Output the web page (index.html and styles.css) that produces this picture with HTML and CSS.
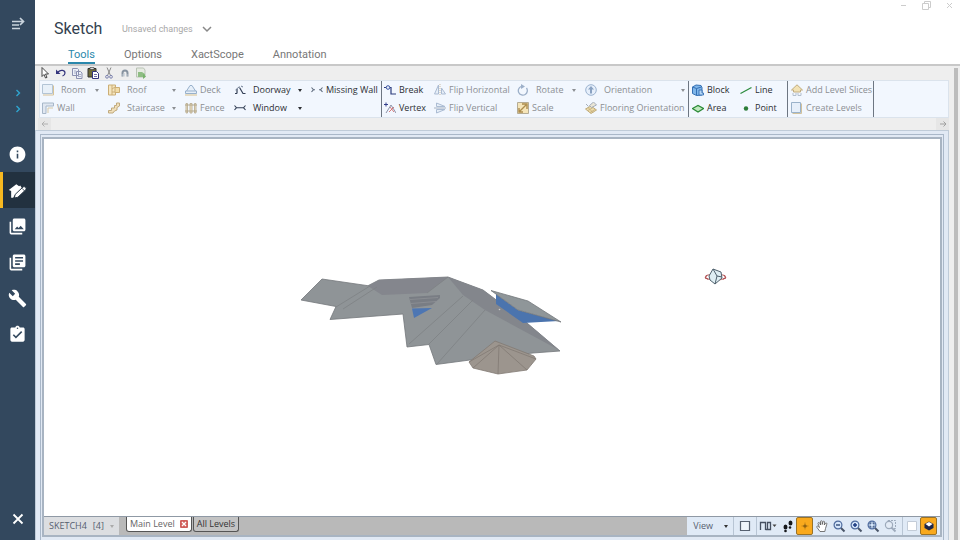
FILE: index.html
```html
<!DOCTYPE html>
<html lang="en">
<head>
<meta charset="utf-8">
<title>Sketch</title>
<link rel="stylesheet" href="styles.css">
</head>
<body>
<div class="app">
  <nav class="sidebar" aria-label="Main">
    <button class="side-btn side-top" aria-label="Expand menu"><svg class="i16" viewBox="0 0 16 16"><path d="M2 5.500h11M10 2l3.500 3.500L10 9M2 9h7M2 12.500h8" fill="none" stroke="#c9d3dc" stroke-width="1.700"/></svg></button>
    <div class="side-chevrons">
      <button class="side-chev" aria-label="Open panel"><svg class="i8" viewBox="0 0 8 8"><path d="M2.500 1l3 3-3 3" fill="none" stroke="#2fa5d0" stroke-width="1.400"/></svg></button>
      <button class="side-chev" aria-label="Open list"><svg class="i8" viewBox="0 0 8 8"><path d="M2.500 1l3 3-3 3" fill="none" stroke="#2fa5d0" stroke-width="1.400"/></svg></button>
    </div>
    <button class="side-btn" aria-label="Info"><svg class="i19" viewBox="0 0 24 24"><path fill="#fff" d="M12 2C6.480 2 2 6.480 2 12s4.480 10 10 10 10-4.480 10-10S17.520 2 12 2zm1 15h-2v-6h2v6zm0-8h-2V7h2v2z"/></svg></button>
    <button class="side-btn active" aria-label="Sketch"><svg class="i19" viewBox="0 0 24 24"><path fill="#fff" d="M1 11.500L10.500 4l3.500 2.500 1.500-.8 2 3L8 18.500 6.500 21H4v-8.500z"/><path fill="#fff" stroke="#22313f" stroke-width="1.200" d="M8 21.500l1-4.500L19 7.500q1.500-1 3 .5t.5 3L12.500 20.500z"/><path stroke="#22313f" d="M17.500 9l3.300 3.500"/></svg></button>
    <button class="side-btn" aria-label="Photos"><svg class="i19" viewBox="0 0 24 24"><path fill="#fff" d="M22 16V4c0-1.100-.9-2-2-2H8c-1.100 0-2 .9-2 2v12c0 1.100.9 2 2 2h12c1.100 0 2-.9 2-2zM8.500 15.500l3-3.500 2 2 2.500-3 4 4.500zM2 6v14c0 1.100.9 2 2 2h14v-2H4V6H2z"/></svg></button>
    <button class="side-btn" aria-label="Documents"><svg class="i19" viewBox="0 0 24 24"><path fill="#fff" d="M4 6H2v14c0 1.100.9 2 2 2h14v-2H4V6zm16-4H8c-1.100 0-2 .9-2 2v12c0 1.100.9 2 2 2h12c1.100 0 2-.9 2-2V4c0-1.100-.9-2-2-2zm-1 9H9V9h10v2zm-4 4H9v-2h6v2zm4-8H9V5h10v2z"/></svg></button>
    <button class="side-btn" aria-label="Settings"><svg class="i19" viewBox="0 0 24 24"><path fill="#fff" d="M22.700 19l-9.100-9.100c.9-2.300.4-5-1.500-6.900-2-2-5-2.400-7.400-1.300L9 6 6 9 1.600 4.700C.4 7.100.9 10.100 2.900 12.100c1.900 1.900 4.600 2.400 6.900 1.500l9.100 9.100c.4.4 1 .4 1.400 0l2.300-2.300c.5-.4.5-1.100.1-1.400z"/></svg></button>
    <button class="side-btn" aria-label="Tasks"><svg class="i19" viewBox="0 0 24 24"><path fill="#fff" d="M19 3h-4.180C14.400 1.840 13.300 1 12 1c-1.300 0-2.400.84-2.820 2H5c-1.100 0-2 .9-2 2v14c0 1.100.9 2 2 2h14c1.100 0 2-.9 2-2V5c0-1.100-.9-2-2-2zm-7 0c.55 0 1 .45 1 1s-.45 1-1 1-1-.45-1-1 .45-1 1-1zm-2 14l-4-4 1.410-1.410L10 14.170l6.590-6.590L18 9l-8 8z"/></svg></button>
    <button class="side-btn side-close" aria-label="Close"><svg class="i12" viewBox="0 0 12 12"><path d="M1.500 1.500l9 9M10.500 1.500l-9 9" stroke="#fff" stroke-width="1.800"/></svg></button>
  </nav>

  <div class="main">
    <header class="header">
      <div class="window-btns">
        <button aria-label="Minimize"><svg class="i12" viewBox="0 0 12 12"><path d="M4 5.500h5" stroke="#ccc"/></svg></button>
        <button aria-label="Restore"><svg class="i12" viewBox="0 0 12 12"><path d="M2.500 3.500h6v6h-6zM4.500 3V1.500h6v6H9" fill="none" stroke="#ccc"/></svg></button>
        <button aria-label="Close window"><svg class="i12" viewBox="0 0 12 12"><path d="M4 3l5 5M9 3L4 8" stroke="#ccc"/></svg></button>
      </div>
      <div class="title-row">
        <h1>Sketch</h1>
        <span class="saved">Unsaved changes</span>
        <button aria-label="Show changes"><svg class="i10" viewBox="0 0 10 10"><path d="M1 3l4 4 4-4" fill="none" stroke="#888" stroke-width="1.500"/></svg></button>
      </div>
      <nav class="tabs" aria-label="Sections">
        <a class="on" href="#tools">Tools</a>
        <a href="#options">Options</a>
        <a href="#xactscope">XactScope</a>
        <a href="#annotation">Annotation</a>
      </nav>
    </header>

    <div class="workspace">
      <div class="work-col">
        <div class="quick">
          <button aria-label="Select"><svg class="i12" viewBox="0 0 12 12"><path d="M3 .5v9l2-2L6.500 11l1.500-.6L6.500 7h3z" fill="#fff" stroke="#333" stroke-width=".9"/></svg></button>
          <button aria-label="Undo"><svg class="i12" viewBox="0 0 12 12"><path d="M3 5c3-3 7-1.500 7 1 0 1.500-1 2.500-2.500 3" fill="none" stroke="#34347c" stroke-width="1.200"/><path d="M1 2.500V7h4.500z" fill="#34347c"/></svg></button>
          <button aria-label="Copy"><svg class="i12" viewBox="0 0 12 12"><path d="M1.500 1.500h5l1 1v6h-6zM5.500 4.500h4l1.500 1.500v5.500H5.500z" fill="#edf0f8" stroke="#8b90b0"/><path d="M3 4h2M3 6h2M7 7.500h3M7 9.500h3" stroke="#8b90b0" stroke-width=".7"/></svg></button>
          <button aria-label="Paste"><svg class="i12" viewBox="0 0 12 12"><path d="M1 1.500h8V10H1z" fill="#6e6a38" stroke="#333"/><path d="M3 .5h4v2H3z" fill="#ddd" stroke="#333" stroke-width=".6"/><path d="M5.500 4.500h4l2 2v5h-6z" fill="#fff" stroke="#34347c"/><path d="M7 7.500h3M7 9.500h3" stroke="#34347c" stroke-width=".7"/></svg></button>
          <button aria-label="Cut"><svg class="i12" viewBox="0 0 12 12"><path d="M4 .5l3.500 8M8 .5L4.500 8.500" stroke="#888" fill="none"/><circle cx="4" cy="9.800" r="1.400" fill="none" stroke="#7d83b0"/><circle cx="8" cy="9.800" r="1.400" fill="none" stroke="#7d83b0"/></svg></button>
          <button aria-label="Snap"><svg class="i12" viewBox="0 0 12 12"><path d="M3.500 9.500V6a2.500 2.500 0 0 1 5 0v3.500" fill="none" stroke="#8793a0" stroke-width="2"/><path d="M5.500 6v3.500M2 8h3M7 8h3" stroke="#c9d2da" stroke-width=".8"/></svg></button>
          <button aria-label="Export"><svg class="i12" viewBox="0 0 12 12"><path d="M1.500 1h7l1.500 2v7H1.500z" fill="#e6ebe2" stroke="#b9c3b5"/><path d="M3 5h4l3 2v3H3z" fill="#8fbd83"/><path d="M8 7l3 2.500L8 12z" fill="#77b26b"/></svg></button>
        </div>

        <div class="ribbon">
          <div class="group g-rooms">
            <div class="col">
              <button class="tool wide"><svg class="i12" viewBox="0 0 12 12"><path d="M.5.5h10v9H.5z" fill="#e7eff8" stroke="#a9bccf"/><path d="M1 11h10.500V1.500" fill="none" stroke="#d4ba85"/></svg><span>Room</span><i class="caret"></i></button>
              <button class="tool"><svg class="i12" viewBox="0 0 12 12"><path d="M.5 1h11v3H4v7.500H.5z" fill="#dde5ef" stroke="#9aadc0"/><path d="M6 6h5M6 6v5" stroke="#d4c299"/></svg><span>Wall</span></button>
            </div>
            <div class="col">
              <button class="tool wide"><svg class="i12" viewBox="0 0 12 12"><path d="M.5 1h7v10h-7z" fill="#f6e4b6" stroke="#c5a25f"/><path d="M7 3.500h4.500v5H7z" fill="#f2d99a" stroke="#c5a25f"/><path d="M4 1v10M4 5l3-2M4 8h3" stroke="#c5a25f" fill="none"/></svg><span>Roof</span><i class="caret"></i></button>
              <button class="tool wide"><svg class="i12" viewBox="0 0 12 12"><path d="M.5 11V8.500h3V6h3V3.500h2V1h3v3L9 5.500V8L6.500 9 5 11z" fill="#f1ddb0" stroke="#b89d68"/></svg><span>Staircase</span><i class="caret"></i></button>
            </div>
            <div class="col">
              <button class="tool"><svg class="i12" viewBox="0 0 12 12"><path d="M.5 9.500V7h11v2.500zM1.500 7L5 1.500h2L10.500 7" fill="#e4eef9" stroke="#89a5c3"/><path d="M0 11h12" stroke="#d4b97a"/></svg><span>Deck</span></button>
              <button class="tool"><svg class="i12" viewBox="0 0 12 12"><path d="M1 1.500h1.500v9.500H1zM5 1.500h2v9.500H5zM9.500 1.500H11v9.500H9.500z" fill="#f3e3bf" stroke="#a89a78" stroke-width=".8"/><path d="M0 3h12M0 9h12" stroke="#a89a78"/></svg><span>Fence</span></button>
            </div>
            <div class="col enabled">
              <button class="tool wide"><svg class="i12" viewBox="0 0 12 12"><path d="M1 9.500h2M3 9.500V5M5.500 3.500L9 9.500h2.500" fill="none" stroke="#333f55" stroke-width="1.200"/><path d="M1.500 6l4-3.500M7 2l2 1" stroke="#6d7c92"/></svg><span>Doorway</span><i class="caret"></i></button>
              <button class="tool wide"><svg class="i12" viewBox="0 0 12 12"><path d="M.5 3.500l2 2.200-2 2.300M11.500 3.500l-2 2.200 2 2.300M2.500 5.700h7" fill="none" stroke="#333f55" stroke-width="1.100"/></svg><span>Window</span><i class="caret"></i></button>
            </div>
            <div class="col enabled">
              <button class="tool"><svg class="i12" viewBox="0 0 12 12"><path d="M.5 3.500l2 2.200-2 2.300M11.500 3.500l-2 2.200 2 2.300M2.500 5.700H4M8 5.700h1.500" fill="none" stroke="#5f6b7d" stroke-width="1.100"/></svg><span>Missing Wall</span></button>
            </div>
          </div>
          <div class="group g-edit">
            <div class="col enabled">
              <button class="tool"><svg class="i12" viewBox="0 0 12 12"><path d="M0 3.500h7v6.500h5" fill="none" stroke="#2c3c7c" stroke-width="1.200"/><circle cx="4" cy="3.500" r="1.800" fill="#e7eefa" stroke="#3c56a4"/></svg><span>Break</span></button>
              <button class="tool"><svg class="i12" viewBox="0 0 12 12"><path d="M2 11l5-8 5 8" fill="none" stroke="#8c92a8"/><path d="M0 2.500h4M2 .5v4" stroke="#34408c"/><path d="M5 10l5-5M6 5l4 5" stroke="#cf5c5c" stroke-width=".8"/></svg><span>Vertex</span></button>
            </div>
            <div class="col">
              <button class="tool"><svg class="i12" viewBox="0 0 12 12"><path d="M4.500 1v9H.5zM7.500 4v6h4z" fill="#e6eef8" stroke="#9fb2cc"/><path d="M6 0v12" stroke="#c5b595" stroke-dasharray="1 1"/></svg><span>Flip Horizontal</span></button>
              <button class="tool"><svg class="i12" viewBox="0 0 12 12"><path d="M2.500 4.500V1l8.500 3.500zM2.500 7.500h8.500L2.500 11z" fill="#e6eef8" stroke="#9fb2cc"/><path d="M0 6h12" stroke="#9aa8b8"/></svg><span>Flip Vertical</span></button>
            </div>
            <div class="col">
              <button class="tool wide"><svg class="i12" viewBox="0 0 12 12"><path d="M4 2.500A4.500 4.500 0 1 0 9.500 4" fill="none" stroke="#8fa4c0" stroke-width="1.300"/><path d="M4 0l4 2.500L4 5z" fill="#8fa4c0"/></svg><span>Rotate</span><i class="caret"></i></button>
              <button class="tool"><svg class="i12" viewBox="0 0 12 12"><path d="M.5.5h11v11H.5z" fill="#f6e2ae" stroke="#ab9f83"/><path d="M2 10l7-7M5 2h5v5M2 6v4h4" fill="none" stroke="#a17b2f" stroke-width="1.400"/></svg><span>Scale</span></button>
            </div>
            <div class="col">
              <button class="tool wide"><svg class="i12" viewBox="0 0 12 12"><circle cx="6" cy="6" r="5.300" fill="#e4eefb" stroke="#8ea8c8"/><path d="M6 2L9 5.500H7V9.500H5V5.500H3z" fill="#7894b8"/></svg><span>Orientation</span><i class="caret"></i></button>
              <button class="tool"><svg class="i12" viewBox="0 0 12 12"><path d="M.5 7L6 4l5.500 4L6 11.500z" fill="#eed99f" stroke="#b79e63"/><path d="M3 8.500l5-3M5 10.500l5-3M3 5.500l5 5" stroke="#b79e63" stroke-width=".8"/><path d="M1 2l2.500 2.500M8.500 0l3 3-5 2.500-2-2z" stroke="#8e9aa8" stroke-width=".9" fill="#e8e2cf"/></svg><span>Flooring Orientation</span></button>
            </div>
          </div>
          <div class="group g-objects enabled">
            <div class="col">
              <button class="tool"><svg class="i12" viewBox="0 0 12 12"><path d="M.5 3L4 1l5 .5 1 2v7.500L4.500 11.500.5 9.500z" fill="#7fb6ea" stroke="#3570b4"/><path d="M.5 3l4 1.500v7M4.500 4.500L9.500 3" fill="none" stroke="#3570b4"/><path d="M7 6v5h4.500V9H10V6z" fill="#b5d5f4" stroke="#3570b4" stroke-width=".9"/></svg><span>Block</span></button>
              <button class="tool"><svg class="i12" viewBox="0 0 12 12"><path d="M.5 6.500L6 3.500l5.500 3L6 10z" fill="#bfe8bd" stroke="#2b8a37" stroke-width="1.200"/></svg><span>Area</span></button>
            </div>
            <div class="col">
              <button class="tool"><svg class="i12" viewBox="0 0 12 12"><path d="M.5 9.500l11-6" stroke="#2b8a3c" stroke-width="1.200"/></svg><span>Line</span></button>
              <button class="tool"><svg class="i12" viewBox="0 0 12 12"><circle cx="6" cy="6.500" r="2.200" fill="#2d7d38"/></svg><span>Point</span></button>
            </div>
          </div>
          <div class="group g-levels">
            <div class="col">
              <button class="tool"><svg class="i12" viewBox="0 0 12 12"><path d="M.5 6L6 .8 11.500 6h-2v2h-7V6z" fill="#f3dfa9" stroke="#b9a06a"/><path d="M2 9v2.500h3V9M7 9v2.500h3V9" fill="none" stroke="#a8b6c6"/></svg><span>Add Level Slices</span></button>
              <button class="tool"><svg class="i12" viewBox="0 0 12 12"><path d="M.5.5h9v10h-9z" fill="#e4eefa" stroke="#8ba6c2"/><path d="M10.500 1.500v10H1.500" fill="none" stroke="#cdb98c"/></svg><span>Create Levels</span></button>
            </div>
          </div>
        </div>

        <div class="scroll-row">
          <button aria-label="Scroll left"><svg class="i10" viewBox="0 0 10 10"><path d="M2 5h6M4.500 2.500L2 5l2.500 2.500" fill="none" stroke="#b0b0b0"/></svg></button>
          <button aria-label="Scroll right"><svg class="i10" viewBox="0 0 10 10"><path d="M2 5h6M5.500 2.500L8 5 5.500 7.500" fill="none" stroke="#a0a0a0"/></svg></button>
        </div>

        <main class="frame">
          <div class="frame-in">
            <div class="sketch">
              <div class="canvas">
                <svg class="model" viewBox="44 139 896 377" role="img" aria-label="Roof model">
                  <g stroke="#74777b" stroke-width=".8" stroke-linejoin="round">
                    <path fill="#8f9497" d="M301 300l21-21 46 6.700 11-5.700 69-3 35 13 44 33 33 28-27 2-63 7-34 4.500-7-20-22 2.500-4-33-73 5.500 6-13z"/>
                    <path fill="#84868d" stroke="none" d="M368 286l11-6 69-3-21 16-45 2z"/>
                    <path fill="#83868c" stroke="none" d="M448 277l35 13 44 33 32 27-74-40-22-15z"/>
                    <path fill="none" stroke="#7d8184" d="M370 286l-34 21M377 287l-34 22M463 296l-54 48M473 300l-44 44M485 310l-48 54M448 277l-21 16"/>
                    <path fill="#797d84" stroke="none" d="M409 297l31-2v3l-8 7-20 3z"/>
                    <path fill="none" stroke="#8e9195" d="M410 299.500l28-2M411 303.500l25-2"/>
                    <path fill="#4d76b3" stroke="none" d="M412 308.500l20-.5-18 10z"/>
                    <path fill="#4b74ae" stroke="none" d="M496 294l22 16 41 11-36 2-27-19z"/>
                    <path fill="#8f9699" d="M491 290.500l37 10.500 33 21-43-12z"/>
                    <path fill="#9c958e" stroke="#817a74" d="M469 362l26-21 39 15 2 3-9 11-29 4-25-6z"/>
                    <path fill="none" stroke="#817a74" d="M499 345l-30 17M499 345l-26 23M499 345l-1 29M499 345l28 25M499 345l37 14"/>
                  </g>
                  <circle cx="499.500" cy="309.500" r=".8" fill="#ccc"/>
                  <g fill="none">
                    <ellipse cx="715.500" cy="277" rx="10" ry="3" stroke="#c98787" stroke-width="1.200"/>
                    <path d="M709 276l4-7 8 3 1 6-7 6-5-4z" fill="#dfeef3" stroke="#4f616d"/>
                    <path d="M713 269l4 7-2 8M717 276l5 1" stroke="#4f616d"/>
                    <path d="M707 275l-2 3 3 1M724 275l2 3-3 1" stroke="#b14c50"/>
                  </g>
                </svg>
              </div>
              <footer class="bottom">
                <button class="sketch-pick"><span>SKETCH4</span><span>[4]</span><i class="caret"></i></button>
                <div class="levels">
                  <div class="level current"><button>Main Level</button><button class="level-close" aria-label="Close Main Level"><svg class="i8" viewBox="0 0 8 8"><rect width="8" height="8" rx="1" fill="#d0605c"/><path d="M2 2l4 4M6 2L2 6" stroke="#fff" stroke-width="1.300"/></svg></button></div>
                  <div class="level"><button>All Levels</button></div>
                </div>
                <div class="view-tools">
                  <button class="view-pick"><span>View</span><i class="caret"></i></button>
                  <div class="vt">
                  <button class="double" aria-label="Single pane"><svg class="i14" viewBox="0 0 14 14"><path d="M2.500 2.500h9v9h-9z" fill="#eef4fb" stroke="#566070" stroke-width="1.200"/></svg></button>
                  </div>
                  <div class="vt spaced">
                  <button class="double" aria-label="Layout"><svg class="i18" viewBox="0 0 18 14"><path d="M1.500 11V3.500h5V11M6.500 10.500h5v-7h-3V10" fill="none" stroke="#465061" stroke-width="1.300"/><path d="M13.500 5.500h4L15.500 8z" fill="#444"/></svg></button>
                  <button aria-label="Walk"><svg class="i14" viewBox="0 0 14 14"><ellipse cx="4.500" cy="8" rx="2" ry="2.600" fill="#15171b"/><circle cx="4.500" cy="12" r="1.300" fill="#15171b"/><ellipse cx="9.500" cy="4" rx="2" ry="2.600" fill="#15171b"/><circle cx="9" cy="8.500" r="1.300" fill="#15171b"/></svg></button>
                  <button class="lit" aria-label="Orbit"><svg class="i14" viewBox="0 0 14 14"><circle cx="7" cy="7" r="1.600" fill="#4d3512"/><path d="M3.500 7h7M7 3.500v7" stroke="#b97f14" stroke-width=".8"/></svg></button>
                  <button aria-label="Pan"><svg class="i14" viewBox="0 0 14 14"><path d="M5 12.500L2 8.500c-.8-1.300.5-2 1.500-.8L4.500 8.500 3 4.500c0-1.200 1.300-1.400 1.700-.3l.8 1.800V2.500c.2-1 1.500-1 1.700 0v3l.8-2.800c.4-1 1.600-.6 1.500.4L9.300 6l1.200-1.800c.8-.7 1.600 0 1.300 1l-1.300 4.300-.7 3z" fill="#fff" stroke="#555" stroke-width=".8"/></svg></button>
                  <button aria-label="Zoom out"><svg class="i14" viewBox="0 0 14 14"><path d="M8.500 8.500l4 4" stroke="#4a5568" stroke-width="2"/><circle cx="6" cy="6" r="3.900" fill="#d5e6fa" stroke="#4e6b9e" stroke-width="1.200"/><path d="M4 6h4" stroke="#26406f" stroke-width="1.300"/></svg></button>
                  <button aria-label="Zoom in"><svg class="i14" viewBox="0 0 14 14"><path d="M8.500 8.500l4 4" stroke="#4a5568" stroke-width="2"/><circle cx="6" cy="6" r="3.900" fill="#d5e6fa" stroke="#4e6b9e" stroke-width="1.200"/><path d="M4 6h4M6 4v4" stroke="#1c3a80" stroke-width="1.500"/></svg></button>
                  <button aria-label="Zoom extents"><svg class="i14" viewBox="0 0 14 14"><path d="M8.500 8.500l4 4" stroke="#4a5568" stroke-width="2"/><circle cx="6" cy="6" r="3.900" fill="#d5e6fa" stroke="#4e6b9e" stroke-width="1.200"/><path d="M4 5.500V4h1.500M6.500 4H8v1.500M8 6.500V8H6.500M5.500 8H4V6.500" fill="none" stroke="#26406f"/></svg></button>
                  <button aria-label="Zoom window"><svg class="i14" viewBox="0 0 14 14"><path d="M5 1.500h7.500v8H5z" fill="none" stroke="#9daabb" stroke-dasharray="2 1"/><path d="M8.500 8.500l4 4" stroke="#9daabb" stroke-width="1.800"/><circle cx="6" cy="6" r="3.600" fill="#e3ebf5" stroke="#9daabb" stroke-width="1.200"/></svg></button>
                  </div>
                  <div class="vt spaced">
                  <button aria-label="Plain view"><svg class="i14" viewBox="0 0 14 14"><path d="M2.500 2.500h9v9h-9z" fill="#fff" stroke="#c3ccd8"/></svg></button>
                  <button class="lit" aria-label="3D view"><svg class="i14" viewBox="0 0 14 14"><path d="M2.500 5L7 2.500 11.500 5v4L7 11.500 2.500 9z" fill="#1d2548"/><path d="M3.500 5L7 3l3.500 2L7 7.500z" fill="#fff"/></svg></button>
                  </div>
                </div>
              </footer>
            </div>
          </div>
        </main>
      </div>
      <div class="scrollbar"></div>
    </div>
  </div>
</div>
</body>
</html>
```

FILE: styles.css
```css
* { box-sizing: border-box; }

body {
  margin: 0;
  background: #fff;
  font-family: "Open Sans", "Noto Sans", sans-serif;
  font-size: 9px;
  line-height: 14px;
  color: #333;
}

button {
  display: flex;
  align-items: center;
  justify-content: center;
  margin: 0;
  padding: 0;
  border: 0;
  background: none;
  color: inherit;
  font: inherit;
  white-space: nowrap;
}

svg { display: block; flex: none; }
.i8 { width: 8px; height: 8px; }
.i10 { width: 10px; height: 10px; }
.i12 { width: 12px; height: 12px; }
.i14 { width: 14px; height: 14px; }
.i16 { width: 16px; height: 16px; }
.i18 { width: 18px; height: 14px; }
.i19 { width: 19px; height: 19px; }

.caret {
  width: 0;
  border: 2px solid transparent;
  border-top: 3px solid currentColor;
  border-bottom: 0;
}

.app { display: flex; min-height: 100vh; }

/* Sidebar */
.sidebar {
  display: flex;
  flex-direction: column;
  flex: 0 0 35px;
  background: #33485e;
}
.side-btn { height: 36px; }
.side-top { height: 48px; }
.side-chevrons { padding: 37px 0 19px; }
.side-chev { width: 100%; height: 16px; }
.side-btn.active { background: #22313f; box-shadow: inset 3px 0 #f6b820; }
.side-close { height: 44px; margin-top: auto; }

/* Header */
.main { display: flex; flex-direction: column; flex: 1; min-width: 0; }
.header {
  display: flex;
  flex-direction: column;
  height: 66px;
  border-bottom: 2px solid #c8c8c8;
  font-family: Roboto, sans-serif;
}
.window-btns {
  display: flex;
  justify-content: flex-end;
  align-items: flex-start;
  gap: 11px;
  height: 12px;
  padding-right: 5px;
}
.title-row { display: flex; align-items: center; height: 34px; padding-left: 19px; }
.title-row h1 {
  width: 68px;
  margin: 0;
  font-size: 16px;
  font-weight: 400;
  line-height: 20px;
  color: #33414f;
}
.saved { width: 80px; font-size: 9px; color: #a8a8a8; }
.tabs { display: flex; gap: 29px; height: 18px; padding-left: 33px; }
.tabs a {
  height: 18px;
  font-size: 11px;
  line-height: 17px;
  color: #777;
  text-decoration: none;
}
.tabs .on { color: #2b88ac; box-shadow: inset 0 -2px #2b88ac; }

/* Workspace */
.workspace { display: flex; flex: 1; background: #eee; }
.work-col { display: flex; flex-direction: column; flex: 1; min-width: 0; }
.scrollbar { flex: none; width: 4px; margin: 2px 2px 0 5px; background: #bcbcbc; }

.quick { display: flex; align-items: center; gap: 3px; height: 14px; padding-left: 3px; }
.quick button { width: 13px; }

.ribbon {
  display: flex;
  height: 38px;
  margin-left: 4px;
  border: 1px solid #dbe3ec;
  background: #f2f7fe;
}
.group {
  display: grid;
  align-content: start;
  padding-left: 2px;
  border-right: 1px solid #6d7682;
  color: #8c8f93;
}
.g-rooms { grid-template-columns: 66px 77px 49px 77px 70px; }
.g-edit { grid-template-columns: 50px 83px 68px 103px; }
.g-objects { grid-template-columns: 48px 47px; padding-left: 3px; }
.g-levels { grid-template-columns: 82px; padding-left: 3px; }
.enabled { color: #2d2f33; }
.tool { justify-content: flex-start; gap: 3px; width: 100%; height: 18px; }
.tool.wide { gap: 7px; }
.tool .caret { margin-left: auto; margin-right: 9px; }
.g-edit .col:last-child .caret { margin-right: 3px; }
.col:not(.enabled) svg { opacity: 0.85; }
.g-objects .col svg { opacity: 1; }

.scroll-row { display: flex; justify-content: space-between; height: 12px; margin-left: 3px; }
.scroll-row button { width: 13px; background: #e6e6e6; }

/* Canvas frame */
.frame {
  display: flex;
  flex: 1;
  padding: 3px 4px 0;
  border: 1px solid #bfcbd8;
  border-bottom: 0;
  background: #e1e9f4;
}
.frame-in {
  display: flex;
  flex: 1;
  min-width: 0;
  padding: 2px 1px 4px;
  border: 1px solid #a9b7c8;
  border-bottom: 0;
}
.sketch {
  display: flex;
  flex-direction: column;
  flex: 1;
  min-width: 0;
  border: 2px solid #a8b4c2;
  background: #fff;
}
.canvas { display: flex; flex: 1; min-height: 0; }
.model { width: 100%; }

/* Bottom bar */
.bottom {
  display: flex;
  height: 19px;
  border-top: 1px solid #8f99a5;
  background: #b9b9b9;
}
.sketch-pick { gap: 6px; padding: 0 5px; background: #dcdee1; color: #566070; }
.sketch-pick .caret { color: #aaa; }
.levels { display: flex; flex: 1; align-items: flex-start; gap: 1px; padding-left: 7px; }
.level {
  display: flex;
  align-items: center;
  gap: 5px;
  height: 15px;
  padding: 0 3px;
  border: 1px solid #555;
  border-top: 0;
  border-radius: 0 0 3px 3px;
  background: #c3c3c3;
}
.level.current { background: #fff; color: #666; }
.view-tools { display: flex; padding-right: 3px; background: #e0eaf6; }
.view-pick { gap: 11px; padding: 0 5px 0 6px; color: #566070; }
.view-pick .caret { color: #333; }
.vt { display: flex; border-left: 1px solid #b8c5d4; }
.vt.spaced + .spaced { margin-left: 4px; }
.vt button { width: 17px; }
.vt .double { width: 22px; }
.vt .lit { border: 1px solid #9a7226; border-radius: 2px; background: #f9a91d; }
```
